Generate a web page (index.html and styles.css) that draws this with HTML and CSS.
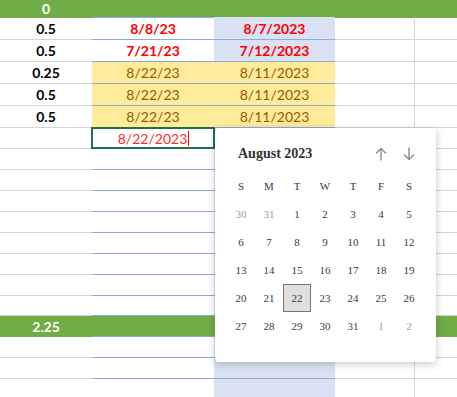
FILE: index.html
```html
<!DOCTYPE html>
<html>
<head>
<meta charset="utf-8">
<meta name="viewport" content="width=device-width, initial-scale=1" />
<title>Hours sheet with date picker</title>
<link rel="stylesheet" href="styles.css">
</head>
<body>

<div class="sheet">
    <div class="row green h17"><div class="c a">0</div><div class="c b"></div><div class="c cc"></div><div class="c d"></div><div class="c e"></div></div>
    <div class="row h23"><div class="c a">0.5</div><div class="c b hot">8/8/23</div><div class="c cc hot">8/7/2023</div><div class="c d"></div><div class="c e"></div></div>
    <div class="row h22"><div class="c a">0.5</div><div class="c b hot">7/21/23</div><div class="c cc hot">7/12/2023</div><div class="c d"></div><div class="c e"></div></div>
    <div class="row h22"><div class="c a">0.25</div><div class="c b neutral">8/22/23</div><div class="c cc neutral">8/11/2023</div><div class="c d"></div><div class="c e"></div></div>
    <div class="row h22"><div class="c a">0.5</div><div class="c b neutral">8/22/23</div><div class="c cc neutral">8/11/2023</div><div class="c d"></div><div class="c e"></div></div>
    <div class="row h22"><div class="c a">0.5</div><div class="c b neutral">8/22/23</div><div class="c cc neutral">8/11/2023</div><div class="c d"></div><div class="c e"></div></div>
    <div class="row"><div class="c a"></div><div class="c b edit">8/22/2023<span class="caret"></span></div><div class="c cc"></div><div class="c d"></div><div class="c e"></div></div>
    <div class="row"><div class="c a"></div><div class="c b"></div><div class="c cc"></div><div class="c d"></div><div class="c e"></div></div>
    <div class="row"><div class="c a"></div><div class="c b"></div><div class="c cc"></div><div class="c d"></div><div class="c e"></div></div>
    <div class="row"><div class="c a"></div><div class="c b"></div><div class="c cc"></div><div class="c d"></div><div class="c e"></div></div>
    <div class="row"><div class="c a"></div><div class="c b"></div><div class="c cc"></div><div class="c d"></div><div class="c e"></div></div>
    <div class="row"><div class="c a"></div><div class="c b"></div><div class="c cc"></div><div class="c d"></div><div class="c e"></div></div>
    <div class="row"><div class="c a"></div><div class="c b"></div><div class="c cc"></div><div class="c d"></div><div class="c e"></div></div>
    <div class="row"><div class="c a"></div><div class="c b"></div><div class="c cc"></div><div class="c d"></div><div class="c e"></div></div>
    <div class="row h20"><div class="c a"></div><div class="c b"></div><div class="c cc"></div><div class="c d"></div><div class="c e"></div></div>
    <div class="row green"><div class="c a">2.25</div><div class="c b"></div><div class="c cc"></div><div class="c d"></div><div class="c e"></div></div>
    <div class="row"><div class="c a"></div><div class="c b"></div><div class="c cc"></div><div class="c d"></div><div class="c e"></div></div>
    <div class="row"><div class="c a"></div><div class="c b"></div><div class="c cc"></div><div class="c d"></div><div class="c e"></div></div>
    <div class="row"><div class="c a"></div><div class="c b"></div><div class="c cc"></div><div class="c d"></div><div class="c e"></div></div>

    <!-- date picker popup over the sheet -->
    <div class="picker">
        <div class="pick-head">
            <div class="title">August 2023</div>
            <div class="nav">
                <svg width="12" height="14" viewBox="0 0 12 14"><path d="M6 13.5V1.5M1 6.5l5-5 5 5" /></svg>
            </div>
            <div class="nav">
                <svg width="12" height="14" viewBox="0 0 12 14"><path d="M6 0.5v12M1 7.5l5 5 5-5" /></svg>
            </div>
        </div>
        <div class="days">
            <span>S</span><span>M</span><span>T</span><span>W</span><span>T</span><span>F</span><span>S</span>
            <span class="out">30</span><span class="out">31</span><span>1</span><span>2</span><span>3</span><span>4</span><span>5</span>
            <span>6</span><span>7</span><span>8</span><span>9</span><span>10</span><span>11</span><span>12</span>
            <span>13</span><span>14</span><span>15</span><span>16</span><span>17</span><span>18</span><span>19</span>
            <span>20</span><span>21</span><span class="sel">22</span><span>23</span><span>24</span><span>25</span><span>26</span>
            <span>27</span><span>28</span><span>29</span><span>30</span><span>31</span><span class="out">1</span><span class="out">2</span>
        </div>
    </div>
</div>

</body>
</html>
```

FILE: styles.css
```css
body { margin: 0; background: #fff; font-family: Lato, "Open Sans", sans-serif; font-size: 14px; overflow: hidden; }

.sheet { position: relative; width: 457px; height: 397px; overflow: hidden; }

.row { display: grid; grid-template-columns: 92px 122px 121px 80px 1fr; height: 21px; }
.row.h17 { height: 17px; }
.row.h20 { height: 20px; }
.row.h22 { height: 22px; }
.row.h23 { height: 23px; }

.c { box-sizing: border-box; display: flex; align-items: center; justify-content: center; white-space: nowrap; border-bottom: 1px solid #d4d4d4; }
.c.b, .c.cc { border-bottom-color: #8ea9db; }
.c.cc { background: #d9e1f2; }
.c.d { border-right: 1px solid #d4d4d4; }
.c.a { font-weight: bold; color: #000; }

.hot { color: #ff0000; font-weight: bold; }
.c.neutral { background: #ffeb9c; color: #9c5700; }

.green .c { background: #70ad47; color: #fff; border-right: none; border-bottom-color: #70ad47; }
.green .c.b, .green .c.cc { border-bottom-color: #8ea9db; }

.edit { position: relative; color: #ff2b2b; padding-left: 1px; }
.edit:after { content: ""; position: absolute; left: -1px; top: -1px; right: -1px; bottom: -1px; border: 2px solid #217346; }
.caret { display: inline-block; width: 1px; height: 15px; background: #ff0000; margin-left: 1px; }

.picker { position: absolute; left: 215px; top: 128px; width: 221px; height: 234px; box-sizing: border-box; padding: 9px 13px 0 12px; background: #fff; border-radius: 4px; box-shadow: 0 2px 8px rgba(0, 0, 0, 0.22); font-family: "Liberation Serif", "DejaVu Serif", serif; color: #3a3a3a; }
.pick-head { display: flex; align-items: center; height: 34px; }
.pick-head .title { flex: 1; margin-left: 11px; font-size: 14px; font-weight: bold; color: #333; }
.pick-head .nav { width: 28px; display: flex; justify-content: center; align-items: center; }
.pick-head svg path { fill: none; stroke: #8c8c8c; stroke-width: 1.4; }

.days { display: grid; grid-template-columns: repeat(7, 28px); grid-auto-rows: 28px; margin-top: 1px; font-size: 11px; }
.days span { display: flex; align-items: center; justify-content: center; box-sizing: border-box; }
.days span.out { color: #9a9a9a; }
.days span.sel { background: #e0dfde; border: 1px solid #777; }
```
